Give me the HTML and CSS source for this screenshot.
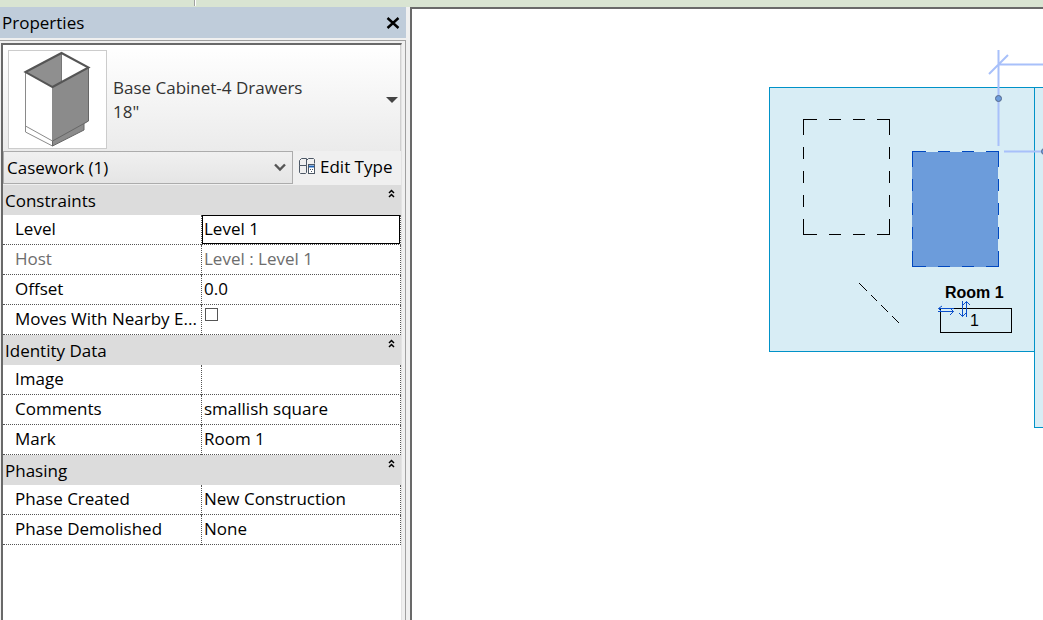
FILE: index.html
```html
<!DOCTYPE html>
<html lang="en">
<head>
    <meta charset="UTF-8">
    <meta name="viewport" content="width=device-width, initial-scale=1.0">
    <title>Properties</title>
    <link rel="stylesheet" href="styles.css">
</head>
<body>

    <div class="ribbon"><span class="ribbon-divider"></span></div>

    <div class="workspace">
        <aside class="palette">
            <div class="palette-title">
                <h1>Properties</h1>
                <button class="close" type="button" aria-label="Close">
                    <svg width="14" height="14" viewBox="0 0 14 14">
                        <path d="M1.5 2L12.5 12M12.5 2L1.5 12" stroke="#000" stroke-width="2.4" fill="none"/>
                    </svg>
                </button>
            </div>

            <div class="palette-frame">
                <div class="palette-body">
                    <button class="type-selector" type="button">
                        <svg class="thumb" width="99" height="99" viewBox="0 0 99 99">
                            <rect x="0.5" y="0.5" width="98" height="98" fill="#fff" stroke="#ccc"/>
                            <path d="M53.5 3L17.5 22L44.5 37L53.5 32Z" fill="#8f8f8f"/>
                            <path d="M44.5 37L80.5 17V71L76 74V80L44.5 96Z" fill="#8b8b8b"/>
                            <path d="M17.5 22V82L44.5 96V37" fill="#fff" stroke="#8a8a8a"/>
                            <path d="M17.5 76L44.5 91" fill="none" stroke="#8a8a8a"/>
                            <path d="M44.5 91L80.5 71V17M76 74V80L44.5 96V91" fill="none" stroke="#666"/>
                            <path d="M53.5 3V32" fill="none" stroke="#777"/>
                            <path d="M17.5 22L53.5 3L80.5 17.5L44.5 37Z" fill="none" stroke="#555" stroke-width="2"/>
                        </svg>
                        <span class="type-name">Base Cabinet-4 Drawers<br>18"</span>
                        <svg class="drop-arrow" width="12" height="6" viewBox="0 0 12 6">
                            <path d="M0 0H12L6 6Z" fill="#444"/>
                        </svg>
                    </button>

                    <div class="filter-row">
                        <div class="filter">
                            <select aria-label="Category filter">
                                <option>Casework (1)</option>
                            </select>
                            <svg class="chevron" width="12" height="9" viewBox="0 0 12 9">
                                <path d="M1 1.5L6 6.5L11 1.5" stroke="#555" stroke-width="2.4" fill="none"/>
                            </svg>
                        </div>
                        <button class="edit-type" type="button">
                            <svg width="17" height="17" viewBox="0 0 17 17" fill="none" stroke="#4d5866">
                                <path d="M0.5 7.5V2.5L2.5 0.5H7.5V7.5ZM7.5 7.5V2.5L9.5 0.5H14.5L15.5 1.5V5.5M7.5 7.5V14.5L6.5 15.5H1.5L0.5 14.5V7.5"/>
                                <rect x="9.5" y="6.5" width="6" height="9" fill="#fff"/>
                                <path d="M10 8.5H15" stroke="#1d62b5" stroke-width="2"/>
                                <path d="M11 11.5H12M13 11.5H14M12 13.5H13"/>
                            </svg>
                            Edit Type
                        </button>
                    </div>

                    <table class="props">
                        <colgroup>
                            <col class="name-col">
                            <col>
                        </colgroup>
                        <tbody>
                            <tr class="group">
                                <th colspan="2">
                                    <div class="group-head">Constraints
                                        <button type="button" aria-label="Collapse Constraints">
                                            <svg width="7" height="9" viewBox="0 0 7 9"><path d="M1 4L3.5 1.5L6 4M1 8L3.5 5.5L6 8"/></svg>
                                        </button>
                                    </div>
                                </th>
                            </tr>
                            <tr class="active">
                                <th><label for="level">Level</label></th>
                                <td><input type="text" id="level" value="Level 1"></td>
                            </tr>
                            <tr class="readonly">
                                <th><label for="host">Host</label></th>
                                <td><input type="text" id="host" value="Level : Level 1" disabled></td>
                            </tr>
                            <tr>
                                <th><label for="offset">Offset</label></th>
                                <td><input type="text" id="offset" value="0.0"></td>
                            </tr>
                            <tr>
                                <th><label for="moves">Moves With Nearby E...</label></th>
                                <td class="check"><input type="checkbox" id="moves"></td>
                            </tr>
                        </tbody>
                        <tbody>
                            <tr class="group">
                                <th colspan="2">
                                    <div class="group-head">Identity Data
                                        <button type="button" aria-label="Collapse Identity Data">
                                            <svg width="7" height="9" viewBox="0 0 7 9"><path d="M1 4L3.5 1.5L6 4M1 8L3.5 5.5L6 8"/></svg>
                                        </button>
                                    </div>
                                </th>
                            </tr>
                            <tr>
                                <th><label for="image">Image</label></th>
                                <td><input type="text" id="image" value=""></td>
                            </tr>
                            <tr>
                                <th><label for="comments">Comments</label></th>
                                <td><input type="text" id="comments" value="smallish square"></td>
                            </tr>
                            <tr>
                                <th><label for="mark">Mark</label></th>
                                <td><input type="text" id="mark" value="Room 1"></td>
                            </tr>
                        </tbody>
                        <tbody>
                            <tr class="group">
                                <th colspan="2">
                                    <div class="group-head">Phasing
                                        <button type="button" aria-label="Collapse Phasing">
                                            <svg width="7" height="9" viewBox="0 0 7 9"><path d="M1 4L3.5 1.5L6 4M1 8L3.5 5.5L6 8"/></svg>
                                        </button>
                                    </div>
                                </th>
                            </tr>
                            <tr>
                                <th><label for="created">Phase Created</label></th>
                                <td><input type="text" id="created" value="New Construction"></td>
                            </tr>
                            <tr>
                                <th><label for="demolished">Phase Demolished</label></th>
                                <td><input type="text" id="demolished" value="None"></td>
                            </tr>
                        </tbody>
                    </table>
                </div>
            </div>
        </aside>

        <main class="view">
            <svg class="plan" fill="none">
                <!-- rooms -->
                <g class="room">
                    <rect x="357.5" y="78.5" width="265" height="264"/>
                    <rect x="622.5" y="78.5" width="265" height="340"/>
                </g>

                <!-- cabinet and door swing -->
                <g stroke="#000">
                    <path d="M391 110.5H478M391 225.5H478" stroke-dasharray="14 12 12 12 12 12 13"/>
                    <path d="M391.5 110V226M477.5 110V226" stroke-dasharray="16 12 12 12 12 12 12 12 16"/>
                    <path d="M447 274L455 282M459 286L465 292M469 296L476 303M480 307L487 314"/>
                </g>

                <!-- selected cabinet -->
                <rect x="500" y="143" width="86" height="115" fill="#6c9cdb"/>
                <g stroke="#0048c0">
                    <path d="M500 142.5H587M500 257.5H587" stroke-dasharray="14 12 12 12 12 12 13"/>
                    <path d="M500.5 142V258M586.5 142V258" stroke-dasharray="16 12 12 12 12 12 12 12 16"/>
                </g>

                <!-- temporary dimensions -->
                <g class="dim">
                    <path d="M586.5 41V137M586.5 55.5H900M577 65L596 46M592 142.5H900"/>
                    <circle cx="586.5" cy="89.5" r="3"/>
                    <circle cx="632.5" cy="142.5" r="3"/>
                </g>

                <!-- room tag -->
                <text class="tag-name" x="533" y="289">Room 1</text>
                <rect x="528.5" y="299.5" width="71" height="24" stroke="#000"/>
                <text class="tag-number" x="558" y="317">1</text>

                <!-- flip controls -->
                <g stroke="#0a4fcb">
                    <path d="M542 299.5H526.5M530 297L526.5 299.5L530 303M526 302.5H541.5M538 299L541.5 302.5L538 306"/>
                    <path d="M550.5 292V307.5M547 304L550.5 307.5L554 304M554.5 308V292.5M551 296L554.5 292.5L558 296"/>
                </g>
            </svg>
        </main>
    </div>

</body>
</html>
```

FILE: styles.css
```css
* {
    box-sizing: border-box;
}
body {
    display: flex;
    flex-direction: column;
    height: 100vh;
    margin: 0;
    background-color: #f0f0f0;
    font-family: "Open Sans", "Noto Sans", sans-serif;
    font-size: 17px;
    line-height: 24px;
    color: #000;
    overflow: hidden;
}
button, input, select {
    margin: 0;
    padding: 0;
    border: none;
    border-radius: 0;
    background: none;
    font: inherit;
    color: inherit;
}
.ribbon {
    display: flex;
    flex: none;
    height: 7px;
    padding-left: 194px;
    background-color: #d9e4d2;
}
.ribbon-divider {
    width: 2px;
    height: 6px;
    border-left: 1px solid #a0a0a0;
    border-right: 1px solid #fff;
}
.workspace {
    display: grid;
    grid-template-columns: 406px 1fr;
    column-gap: 4px;
    flex: 1;
    min-height: 0;
}

/* properties palette */
.palette {
    display: flex;
    flex-direction: column;
    min-height: 0;
}
.palette-title {
    display: flex;
    align-items: center;
    justify-content: space-between;
    height: 31px;
    padding: 0 6px 0 2px;
    background-color: #bfccda;
}
h1 {
    margin: 0;
    font-size: 17px;
    font-weight: normal;
}
.close {
    display: flex;
}
.palette-frame {
    flex: 1;
    min-height: 0;
    margin-top: 2px;
    padding: 2px 3px 0 1px;
    border-top: 1px solid #a0a0a0;
    border-right: 1px solid #a0a0a0;
}
.palette-body {
    height: 100%;
    border-top: 2px solid #696969;
    border-left: 2px solid #696969;
    border-right: 1px solid #e3e3e3;
    background-color: #fff;
}
.type-selector {
    display: flex;
    align-items: center;
    width: 100%;
    height: 106px;
    padding: 3px 2px 0 5px;
    border-right: 1px solid #d0d0d0;
    background: linear-gradient(#fff, #ebebeb);
    color: #333;
    text-align: left;
}
.type-name {
    flex: 1;
    padding-left: 6px;
}
.filter-row {
    display: flex;
    height: 34px;
    padding-bottom: 1px;
    background-color: #f0f0f0;
}
.filter {
    position: relative;
    width: 290px;
}
.filter select {
    width: 100%;
    height: 33px;
    padding-left: 3px;
    border: 1px solid #acacac;
    background: linear-gradient(#f0f0f0, #e5e5e5);
    appearance: none;
}
.chevron {
    position: absolute;
    top: 12px;
    right: 7px;
    pointer-events: none;
}
.edit-type {
    display: flex;
    align-items: center;
    gap: 4px;
    padding: 0 0 2px 6px;
    white-space: nowrap;
}

/* property grid */
.props {
    width: 100%;
    border-spacing: 0;
    table-layout: fixed;
}
.name-col {
    width: 198px;
}
.props th, .props td {
    height: 30px;
    padding: 0;
    border-bottom: 1px dotted #555;
    font-weight: normal;
    text-align: left;
    white-space: nowrap;
}
.props th {
    padding: 0 0 2px 12px;
}
.props td {
    border-left: 1px dotted #555;
    border-right: 1px dotted #555;
}
.props label {
    display: block;
}
.props input[type="text"] {
    display: block;
    width: 100%;
    height: 29px;
    padding: 0 0 2px 2px;
    outline: none;
}
.props .active input[type="text"] {
    padding-left: 1px;
    border: 1px solid #000;
}
.props .readonly {
    color: #6d6d6d;
}
.props .check {
    padding: 3px 0 0 3px;
    vertical-align: top;
}
.props input[type="checkbox"] {
    display: block;
    width: 13px;
    height: 13px;
    border: 1px solid #555;
    background-color: #fff;
    appearance: none;
}
.props .group th {
    padding: 0;
    border: none;
    background-color: #dcdcdc;
}
.group-head {
    display: flex;
    justify-content: space-between;
    height: 30px;
    padding: 4px 6px 0 2px;
}
.group-head button {
    display: flex;
    height: 9px;
}
.group-head path {
    fill: none;
    stroke: #000;
    stroke-width: 1.5;
}

/* plan view */
.view {
    min-width: 0;
    min-height: 0;
    border-top: 2px solid #696969;
    border-left: 2px solid #696969;
    background-color: #fff;
}
.plan {
    display: block;
    width: 100%;
    height: 100%;
}
.room rect {
    fill: #d8edf5;
    stroke: #0092c8;
}
.dim path {
    stroke: #a8c0fa;
    stroke-width: 2;
}
.dim circle {
    fill: #6c9cdb;
    stroke: #56688c;
}
.tag-name, .tag-number {
    fill: #000;
    font-family: "Liberation Sans", Arial, sans-serif;
    font-size: 16px;
}
.tag-name {
    font-weight: bold;
}
```
